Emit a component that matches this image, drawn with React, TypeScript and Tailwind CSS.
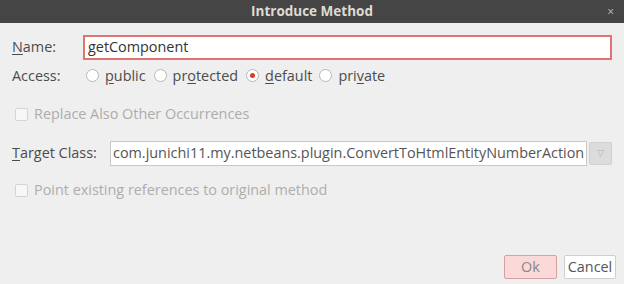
import React from "react";

const font = { fontFamily: '"Open Sans", "DejaVu Sans", sans-serif' };

function Radio({ checked }: { checked?: boolean }) {
  return (
    <span className="inline-flex h-[13px] w-[13px] shrink-0 items-center justify-center rounded-full border border-[#b8b8b8] bg-white">
      {checked && <span className="h-[5px] w-[5px] rounded-full bg-[#e0392b]" />}
    </span>
  );
}

function Check() {
  return <span className="inline-block h-[13px] w-[13px] shrink-0 rounded-[2px] border border-[#d4d4d4] bg-[#f7f7f7]" />;
}

export default function App() {
  return (
    <div className="h-[284px] w-[624px] overflow-hidden whitespace-nowrap bg-[#efefef] text-[14.4px] text-[#4c4c4c]" style={font}>
      <div className="relative flex h-[23px] items-center justify-center bg-[#454545]">
        <span className="text-[13.5px] font-bold text-[#dfdbd2]">Introduce Method</span>
        <span className="absolute right-[10px] top-[3px] text-[12px] text-[#bdbdbd]">×</span>
      </div>
      <div className="flex flex-col px-[12px]">
        <div className="mt-[12px] flex h-[24px] items-center">
          <span className="w-[71px] shrink-0"><span className="underline underline-offset-2">N</span>ame:</span>
          <div className="flex h-[25px] flex-1 items-center border-2 border-[#e27373] bg-white pl-[3px] text-[#333]">getComponent</div>
        </div>
        <div className="mt-[5px] flex h-[24px] items-center">
          <span className="w-[74px] shrink-0">Access:</span>
          <div className="flex items-center gap-[6px]">
            <Radio />
            <span><span className="underline underline-offset-2">p</span>ublic</span>
          </div>
          <div className="ml-[8px] flex items-center gap-[6px]">
            <Radio />
            <span>pr<span className="underline underline-offset-2">o</span>tected</span>
          </div>
          <div className="ml-[8px] flex items-center gap-[6px]">
            <Radio checked />
            <span><span className="underline underline-offset-2">d</span>efault</span>
          </div>
          <div className="ml-[7px] flex items-center gap-[6px]">
            <Radio />
            <span>pri<span className="underline underline-offset-2">v</span>ate</span>
          </div>
        </div>
        <div className="mt-[16px] flex h-[20px] items-center gap-[6px] pl-[3px] text-[#adadad]">
          <Check />
          <span>Replace Also Other Occurrences</span>
        </div>
        <div className="mt-[16px] flex h-[26px] items-center">
          <span className="w-[98px] shrink-0"><span className="underline underline-offset-2">T</span>arget Class:</span>
          <div className="flex h-[25px] flex-1 items-center overflow-hidden border border-[#c8c8c8] bg-white pl-[2px] text-[#555]">com.junichi11.my.netbeans.plugin.ConvertToHtmlEntityNumberAction</div>
          <div className="ml-[2px] flex h-[23px] w-[23px] shrink-0 items-center justify-center rounded-[2px] border border-[#d0d0d0] bg-[#dcdcdc] text-[9px] text-[#b0b0b0]">▽</div>
        </div>
        <div className="mt-[14px] flex h-[20px] items-center gap-[6px] pl-[3px] text-[#adadad]">
          <Check />
          <span>Point existing references to original method</span>
        </div>
      </div>
      <div className="mt-[55px] flex justify-end gap-[7px] pr-[8px]">
        <div className="flex h-[24px] w-[53px] items-center justify-center rounded-[2px] border border-[#d9a0a0] bg-[#fbd9d9] text-[#888]">Ok</div>
        <div className="flex h-[24px] w-[52px] items-center justify-center rounded-[2px] border border-[#cfcfcf] bg-white text-[#555]">Cancel</div>
      </div>
    </div>
  );
}
